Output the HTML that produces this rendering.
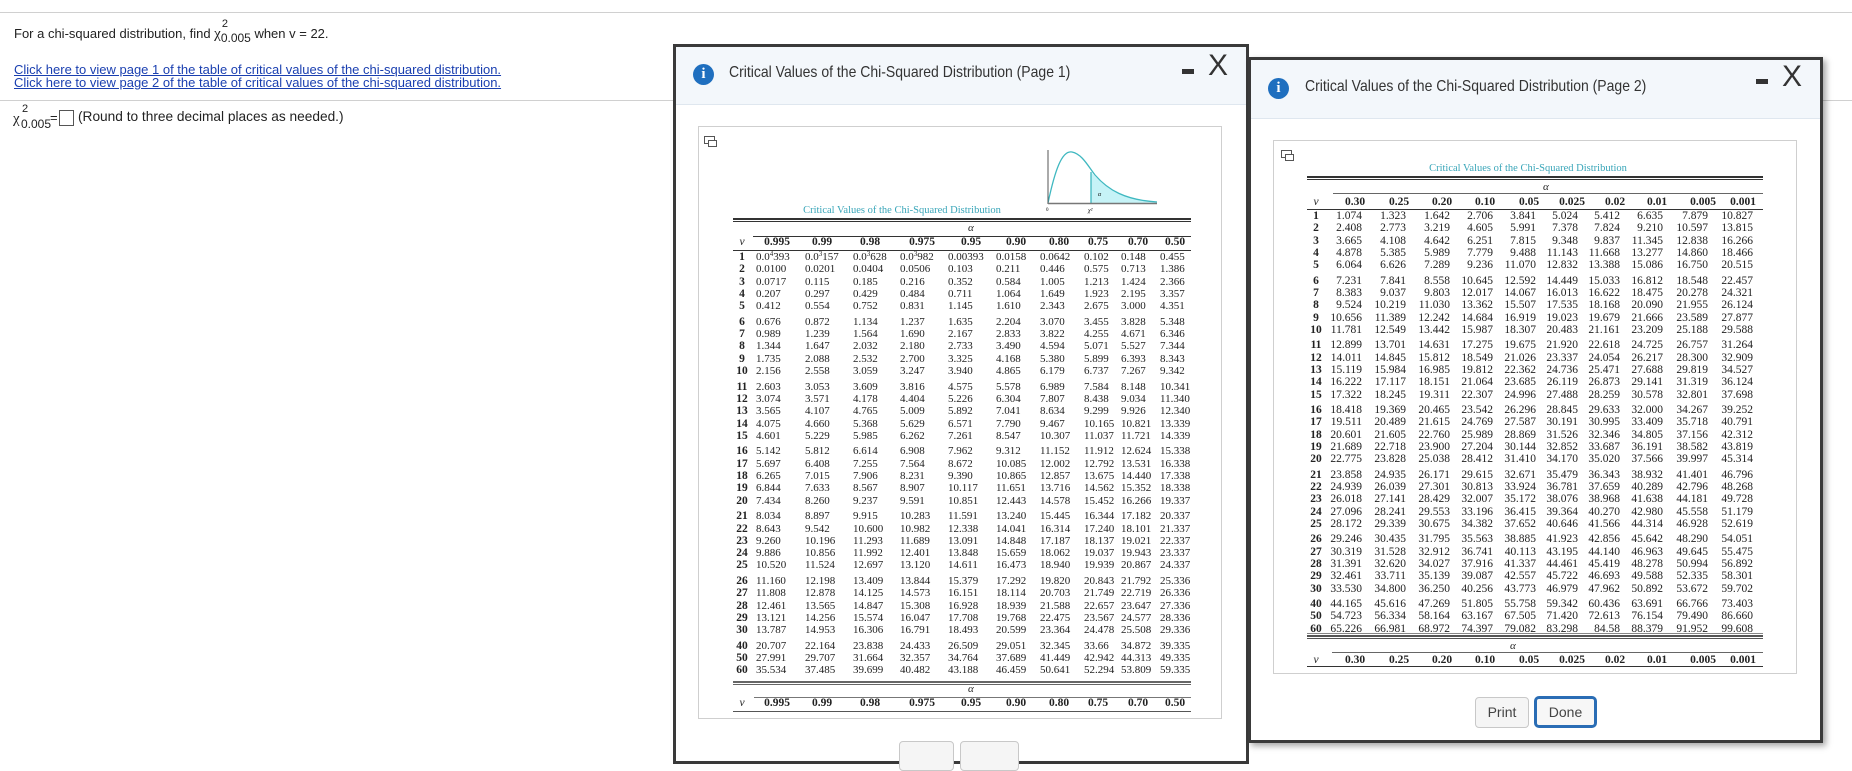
<!DOCTYPE html>
<html><head><meta charset="utf-8">
<style>
html,body{margin:0;padding:0;}
body{width:1852px;height:749px;position:relative;overflow:hidden;background:#fff;font-family:"Liberation Sans",Arial,sans-serif;color:#222;}
.a{position:absolute;white-space:nowrap;}
.hl{position:absolute;height:1px;background:#d0d0d0;}
a{color:#1a3fb0;text-decoration:underline;}
.dlg{position:absolute;background:#fff;border:3px solid #3a3a3a;box-sizing:border-box;}
.hdr{position:absolute;left:0;right:0;top:0;background:#f3f7fb;border-bottom:1px solid #dfe7ef;}
.ico{position:absolute;width:21px;height:21px;border-radius:50%;background:#1f6fbf;color:#fff;font:bold 15px "Liberation Serif",serif;text-align:center;line-height:21px;}
.ttl{position:absolute;font-size:16px;color:#333;white-space:nowrap;transform:scaleX(0.875);transform-origin:0 50%;}
.min{position:absolute;width:12px;height:5px;background:#333;}
.x{position:absolute;font-size:30px;color:#333;line-height:30px;font-weight:300;}
.panel{position:absolute;border:1px solid #cfcfcf;box-sizing:border-box;}
.sm{position:absolute;width:9px;height:6px;border:1.5px solid #555;}
.sm:after{content:"";position:absolute;left:3px;top:3px;width:7px;height:5px;border:1px solid #555;background:#fff;}
.ru{position:absolute;height:1px;background:#333;}
.cap{position:absolute;font:10.5px "Liberation Serif",serif;color:#3aa6b9;white-space:nowrap;transform:translateX(-50%);}
.al{position:absolute;font:italic 11px "Liberation Serif",serif;color:#222;}
.r{position:absolute;left:0;top:0;width:0;height:14px;line-height:14px;font-family:"Liberation Serif",serif;color:#222;}
.r>*{position:absolute;top:0;white-space:nowrap;}
.t1{font-size:11px;}
.t1>b{left:732px;width:20px;text-align:center;font-size:11.5px;}
.t1>span:nth-of-type(1){left:756px}.t1>span:nth-of-type(2){left:805px}.t1>span:nth-of-type(3){left:853px}
.t1>span:nth-of-type(4){left:900px}.t1>span:nth-of-type(5){left:948px}.t1>span:nth-of-type(6){left:996px}
.t1>span:nth-of-type(7){left:1040px}.t1>span:nth-of-type(8){left:1084px}.t1>span:nth-of-type(9){left:1121px}
.t1>span:nth-of-type(10){left:1160px}
.t1 sup{font-size:7px;vertical-align:4px;line-height:0;}
.h1{font-size:11.5px;font-weight:bold;}
.h1>span{width:50px;text-align:center;}
.h1>i{left:732px;width:20px;text-align:center;font-weight:normal;}
.h1>span:nth-of-type(1){left:752px}.h1>span:nth-of-type(2){left:797px}.h1>span:nth-of-type(3){left:845px}
.h1>span:nth-of-type(4){left:897px}.h1>span:nth-of-type(5){left:946px}.h1>span:nth-of-type(6){left:991px}
.h1>span:nth-of-type(7){left:1034px}.h1>span:nth-of-type(8){left:1073px}.h1>span:nth-of-type(9){left:1113px}
.h1>span:nth-of-type(10){left:1150px}
.t2{font-size:11.5px;}
.t2>b{left:1306px;width:20px;text-align:center;}
.t2>span{width:60px;text-align:right;}
.t2>span:nth-of-type(1){left:1302px}.t2>span:nth-of-type(2){left:1346px}.t2>span:nth-of-type(3){left:1390px}
.t2>span:nth-of-type(4){left:1433px}.t2>span:nth-of-type(5){left:1476px}.t2>span:nth-of-type(6){left:1518px}
.t2>span:nth-of-type(7){left:1560px}.t2>span:nth-of-type(8){left:1603px}.t2>span:nth-of-type(9){left:1648px}
.t2>span:nth-of-type(10){left:1693px}
.h2{font-size:11.5px;font-weight:bold;}
.h2>span{width:50px;text-align:center;}
.h2>i{left:1306px;width:20px;text-align:center;font-weight:normal;}
.h2>span:nth-of-type(1){left:1330px}.h2>span:nth-of-type(2){left:1374px}.h2>span:nth-of-type(3){left:1417px}
.h2>span:nth-of-type(4){left:1460px}.h2>span:nth-of-type(5){left:1504px}.h2>span:nth-of-type(6){left:1547px}
.h2>span:nth-of-type(7){left:1590px}.h2>span:nth-of-type(8){left:1632px}.h2>span:nth-of-type(9){left:1678px}
.h2>span:nth-of-type(10){left:1718px}
.btn{position:absolute;box-sizing:border-box;border:1px solid #c8c8c8;border-radius:4px;background:#f5f5f5;font-size:14px;color:#444;text-align:center;}
</style></head><body>

<div class="hl" style="left:0;top:12px;width:1852px;"></div>
<div class="a" style="left:14px;top:26px;font-size:13px;">For a chi-squared distribution, find <span style="font-family:'Liberation Serif',serif;font-size:15px;">χ</span><span style="display:inline-block;position:relative;width:30px;height:10px;"><span style="position:absolute;left:1px;top:-10px;font-size:11px;">2</span><span style="position:absolute;left:0;top:3px;font-size:12px;">0.005</span></span> when v = 22.</div>
<div class="a" style="left:14px;top:63px;font-size:13px;line-height:13px;"><a>Click here to view page 1 of the table of critical values of the chi-squared distribution.</a><br><a>Click here to view page 2 of the table of critical values of the chi-squared distribution.</a></div>
<div class="hl" style="left:0;top:100px;width:1852px;"></div>
<div class="a" style="left:13px;top:110px;"><span style="font-family:'Liberation Serif',serif;font-size:15px;">χ</span></div>
<div class="a" style="left:22px;top:103px;font-size:11px;">2</div>
<div class="a" style="left:21px;top:117px;font-size:12px;">0.005</div>
<div class="a" style="left:50px;top:110px;font-size:13px;">=</div>
<div class="a" style="left:59px;top:110px;width:13px;height:14px;border:1px solid #555;"></div>
<div class="a" style="left:78px;top:109px;font-size:13.7px;">(Round to three decimal places as needed.)</div>

<!-- Dialog 1 -->
<div class="dlg" style="left:673px;top:44px;width:576px;height:720px;">
 <div class="hdr" style="height:57px;"></div>
</div>
<div class="ico" style="left:693px;top:64px;">i</div>
<div class="ttl" style="left:729px;top:64px;">Critical Values of the Chi-Squared Distribution (Page 1)</div>
<div class="min" style="left:1182px;top:69px;"></div>
<div class="x" style="left:1208px;top:51px;">X</div>
<div class="panel" style="left:698px;top:126px;width:524px;height:593px;"></div>
<div class="sm" style="left:704px;top:136px;"></div>
<svg class="a" style="left:1040px;top:145px;" width="125" height="72" viewBox="1040 145 125 72">
 <path d="M1091 172 C1105 188 1120 198 1157 202 L1157 203 L1091 203 Z" fill="#c6f3f7"/>
 <path d="M1048 203 C1055 170 1062 150 1072 152 C1082 154 1088 166 1095 175 C1108 190 1125 200 1157 202" fill="none" stroke="#3fb8c0" stroke-width="1.3"/>
 <line x1="1091" y1="172" x2="1091" y2="203" stroke="#3fb8c0" stroke-width="1.3"/>
 <line x1="1048" y1="150" x2="1048" y2="204" stroke="#555" stroke-width="1"/>
 <line x1="1048" y1="203.5" x2="1157" y2="203.5" stroke="#777" stroke-width="1.5"/>
 <text x="1046" y="211" font-size="5" font-family="Liberation Serif">0</text>
 <text x="1088" y="212" font-size="6" font-family="Liberation Serif" font-style="italic">χ²</text>
 <text x="1098" y="196" font-size="6" font-family="Liberation Serif" font-style="italic">α</text>
</svg>
<div class="cap" style="left:902px;top:205px;">Critical Values of the Chi-Squared Distribution</div>
<div class="ru" style="left:733px;top:218px;width:458px;height:1.5px;"></div>
<div class="ru" style="left:733px;top:221px;width:458px;"></div>
<div class="al" style="left:968px;top:222px;">α</div>
<div class="ru" style="left:753px;top:236px;width:438px;"></div>
<div class="r h1" style="top:235px;"><i>v</i><span>0.995</span><span>0.99</span><span>0.98</span><span>0.975</span><span>0.95</span><span>0.90</span><span>0.80</span><span>0.75</span><span>0.70</span><span>0.50</span></div>
<div class="ru" style="left:733px;top:250px;width:458px;"></div>

<div class="r t1" style="top:250px"><b>1</b><span>0.0<sup>4</sup>393</span><span>0.0<sup>3</sup>157</span><span>0.0<sup>3</sup>628</span><span>0.0<sup>3</sup>982</span><span>0.00393</span><span>0.0158</span><span>0.0642</span><span>0.102</span><span>0.148</span><span>0.455</span></div>
<div class="r t1" style="top:262px"><b>2</b><span>0.0100</span><span>0.0201</span><span>0.0404</span><span>0.0506</span><span>0.103</span><span>0.211</span><span>0.446</span><span>0.575</span><span>0.713</span><span>1.386</span></div>
<div class="r t1" style="top:275px"><b>3</b><span>0.0717</span><span>0.115</span><span>0.185</span><span>0.216</span><span>0.352</span><span>0.584</span><span>1.005</span><span>1.213</span><span>1.424</span><span>2.366</span></div>
<div class="r t1" style="top:287px"><b>4</b><span>0.207</span><span>0.297</span><span>0.429</span><span>0.484</span><span>0.711</span><span>1.064</span><span>1.649</span><span>1.923</span><span>2.195</span><span>3.357</span></div>
<div class="r t1" style="top:299px"><b>5</b><span>0.412</span><span>0.554</span><span>0.752</span><span>0.831</span><span>1.145</span><span>1.610</span><span>2.343</span><span>2.675</span><span>3.000</span><span>4.351</span></div>
<div class="r t1" style="top:315px"><b>6</b><span>0.676</span><span>0.872</span><span>1.134</span><span>1.237</span><span>1.635</span><span>2.204</span><span>3.070</span><span>3.455</span><span>3.828</span><span>5.348</span></div>
<div class="r t1" style="top:327px"><b>7</b><span>0.989</span><span>1.239</span><span>1.564</span><span>1.690</span><span>2.167</span><span>2.833</span><span>3.822</span><span>4.255</span><span>4.671</span><span>6.346</span></div>
<div class="r t1" style="top:339px"><b>8</b><span>1.344</span><span>1.647</span><span>2.032</span><span>2.180</span><span>2.733</span><span>3.490</span><span>4.594</span><span>5.071</span><span>5.527</span><span>7.344</span></div>
<div class="r t1" style="top:352px"><b>9</b><span>1.735</span><span>2.088</span><span>2.532</span><span>2.700</span><span>3.325</span><span>4.168</span><span>5.380</span><span>5.899</span><span>6.393</span><span>8.343</span></div>
<div class="r t1" style="top:364px"><b>10</b><span>2.156</span><span>2.558</span><span>3.059</span><span>3.247</span><span>3.940</span><span>4.865</span><span>6.179</span><span>6.737</span><span>7.267</span><span>9.342</span></div>
<div class="r t1" style="top:380px"><b>11</b><span>2.603</span><span>3.053</span><span>3.609</span><span>3.816</span><span>4.575</span><span>5.578</span><span>6.989</span><span>7.584</span><span>8.148</span><span>10.341</span></div>
<div class="r t1" style="top:392px"><b>12</b><span>3.074</span><span>3.571</span><span>4.178</span><span>4.404</span><span>5.226</span><span>6.304</span><span>7.807</span><span>8.438</span><span>9.034</span><span>11.340</span></div>
<div class="r t1" style="top:404px"><b>13</b><span>3.565</span><span>4.107</span><span>4.765</span><span>5.009</span><span>5.892</span><span>7.041</span><span>8.634</span><span>9.299</span><span>9.926</span><span>12.340</span></div>
<div class="r t1" style="top:417px"><b>14</b><span>4.075</span><span>4.660</span><span>5.368</span><span>5.629</span><span>6.571</span><span>7.790</span><span>9.467</span><span>10.165</span><span>10.821</span><span>13.339</span></div>
<div class="r t1" style="top:429px"><b>15</b><span>4.601</span><span>5.229</span><span>5.985</span><span>6.262</span><span>7.261</span><span>8.547</span><span>10.307</span><span>11.037</span><span>11.721</span><span>14.339</span></div>
<div class="r t1" style="top:444px"><b>16</b><span>5.142</span><span>5.812</span><span>6.614</span><span>6.908</span><span>7.962</span><span>9.312</span><span>11.152</span><span>11.912</span><span>12.624</span><span>15.338</span></div>
<div class="r t1" style="top:457px"><b>17</b><span>5.697</span><span>6.408</span><span>7.255</span><span>7.564</span><span>8.672</span><span>10.085</span><span>12.002</span><span>12.792</span><span>13.531</span><span>16.338</span></div>
<div class="r t1" style="top:469px"><b>18</b><span>6.265</span><span>7.015</span><span>7.906</span><span>8.231</span><span>9.390</span><span>10.865</span><span>12.857</span><span>13.675</span><span>14.440</span><span>17.338</span></div>
<div class="r t1" style="top:481px"><b>19</b><span>6.844</span><span>7.633</span><span>8.567</span><span>8.907</span><span>10.117</span><span>11.651</span><span>13.716</span><span>14.562</span><span>15.352</span><span>18.338</span></div>
<div class="r t1" style="top:494px"><b>20</b><span>7.434</span><span>8.260</span><span>9.237</span><span>9.591</span><span>10.851</span><span>12.443</span><span>14.578</span><span>15.452</span><span>16.266</span><span>19.337</span></div>
<div class="r t1" style="top:509px"><b>21</b><span>8.034</span><span>8.897</span><span>9.915</span><span>10.283</span><span>11.591</span><span>13.240</span><span>15.445</span><span>16.344</span><span>17.182</span><span>20.337</span></div>
<div class="r t1" style="top:522px"><b>22</b><span>8.643</span><span>9.542</span><span>10.600</span><span>10.982</span><span>12.338</span><span>14.041</span><span>16.314</span><span>17.240</span><span>18.101</span><span>21.337</span></div>
<div class="r t1" style="top:534px"><b>23</b><span>9.260</span><span>10.196</span><span>11.293</span><span>11.689</span><span>13.091</span><span>14.848</span><span>17.187</span><span>18.137</span><span>19.021</span><span>22.337</span></div>
<div class="r t1" style="top:546px"><b>24</b><span>9.886</span><span>10.856</span><span>11.992</span><span>12.401</span><span>13.848</span><span>15.659</span><span>18.062</span><span>19.037</span><span>19.943</span><span>23.337</span></div>
<div class="r t1" style="top:558px"><b>25</b><span>10.520</span><span>11.524</span><span>12.697</span><span>13.120</span><span>14.611</span><span>16.473</span><span>18.940</span><span>19.939</span><span>20.867</span><span>24.337</span></div>
<div class="r t1" style="top:574px"><b>26</b><span>11.160</span><span>12.198</span><span>13.409</span><span>13.844</span><span>15.379</span><span>17.292</span><span>19.820</span><span>20.843</span><span>21.792</span><span>25.336</span></div>
<div class="r t1" style="top:586px"><b>27</b><span>11.808</span><span>12.878</span><span>14.125</span><span>14.573</span><span>16.151</span><span>18.114</span><span>20.703</span><span>21.749</span><span>22.719</span><span>26.336</span></div>
<div class="r t1" style="top:599px"><b>28</b><span>12.461</span><span>13.565</span><span>14.847</span><span>15.308</span><span>16.928</span><span>18.939</span><span>21.588</span><span>22.657</span><span>23.647</span><span>27.336</span></div>
<div class="r t1" style="top:611px"><b>29</b><span>13.121</span><span>14.256</span><span>15.574</span><span>16.047</span><span>17.708</span><span>19.768</span><span>22.475</span><span>23.567</span><span>24.577</span><span>28.336</span></div>
<div class="r t1" style="top:623px"><b>30</b><span>13.787</span><span>14.953</span><span>16.306</span><span>16.791</span><span>18.493</span><span>20.599</span><span>23.364</span><span>24.478</span><span>25.508</span><span>29.336</span></div>
<div class="r t1" style="top:639px"><b>40</b><span>20.707</span><span>22.164</span><span>23.838</span><span>24.433</span><span>26.509</span><span>29.051</span><span>32.345</span><span>33.66</span><span>34.872</span><span>39.335</span></div>
<div class="r t1" style="top:651px"><b>50</b><span>27.991</span><span>29.707</span><span>31.664</span><span>32.357</span><span>34.764</span><span>37.689</span><span>41.449</span><span>42.942</span><span>44.313</span><span>49.335</span></div>
<div class="r t1" style="top:663px"><b>60</b><span>35.534</span><span>37.485</span><span>39.699</span><span>40.482</span><span>43.188</span><span>46.459</span><span>50.641</span><span>52.294</span><span>53.809</span><span>59.335</span></div>
<div class="ru" style="left:733px;top:681px;width:458px;height:1.5px;background:#666;"></div>
<div class="ru" style="left:733px;top:684px;width:458px;background:#666;"></div>
<div class="al" style="left:968px;top:683px;">α</div>
<div class="ru" style="left:754px;top:697px;width:437px;background:#777;"></div>
<div class="r h1" style="top:696px;"><i>v</i><span>0.995</span><span>0.99</span><span>0.98</span><span>0.975</span><span>0.95</span><span>0.90</span><span>0.80</span><span>0.75</span><span>0.70</span><span>0.50</span></div>
<div class="ru" style="left:733px;top:711px;width:458px;background:#555;"></div>
<div class="btn" style="left:899px;top:741px;width:55px;height:30px;"></div>
<div class="btn" style="left:960px;top:741px;width:59px;height:30px;"></div>

<!-- Dialog 2 -->
<div class="dlg" style="left:1248px;top:57px;width:575px;height:686px;box-shadow:3px 3px 6px rgba(0,0,0,.35);">
 <div class="hdr" style="height:58px;"></div>
</div>
<div class="ico" style="left:1268px;top:78px;">i</div>
<div class="ttl" style="left:1305px;top:78px;">Critical Values of the Chi-Squared Distribution (Page 2)</div>
<div class="min" style="left:1756px;top:79px;"></div>
<div class="x" style="left:1782px;top:62px;">X</div>
<div class="panel" style="left:1273px;top:140px;width:524px;height:534px;"></div>
<div class="sm" style="left:1281px;top:150px;"></div>
<div class="cap" style="left:1528px;top:163px;">Critical Values of the Chi-Squared Distribution</div>
<div class="ru" style="left:1307px;top:176px;width:456px;height:1.5px;"></div>
<div class="ru" style="left:1307px;top:179px;width:456px;"></div>
<div class="al" style="left:1543px;top:181px;">α</div>
<div class="ru" style="left:1333px;top:193px;width:430px;background:#666;"></div>
<div class="r h2" style="top:195px;"><i>v</i><span>0.30</span><span>0.25</span><span>0.20</span><span>0.10</span><span>0.05</span><span>0.025</span><span>0.02</span><span>0.01</span><span>0.005</span><span>0.001</span></div>
<div class="ru" style="left:1307px;top:209px;width:456px;"></div>

<div class="r t2" style="top:209px"><b>1</b><span>1.074</span><span>1.323</span><span>1.642</span><span>2.706</span><span>3.841</span><span>5.024</span><span>5.412</span><span>6.635</span><span>7.879</span><span>10.827</span></div>
<div class="r t2" style="top:221px"><b>2</b><span>2.408</span><span>2.773</span><span>3.219</span><span>4.605</span><span>5.991</span><span>7.378</span><span>7.824</span><span>9.210</span><span>10.597</span><span>13.815</span></div>
<div class="r t2" style="top:234px"><b>3</b><span>3.665</span><span>4.108</span><span>4.642</span><span>6.251</span><span>7.815</span><span>9.348</span><span>9.837</span><span>11.345</span><span>12.838</span><span>16.266</span></div>
<div class="r t2" style="top:246px"><b>4</b><span>4.878</span><span>5.385</span><span>5.989</span><span>7.779</span><span>9.488</span><span>11.143</span><span>11.668</span><span>13.277</span><span>14.860</span><span>18.466</span></div>
<div class="r t2" style="top:258px"><b>5</b><span>6.064</span><span>6.626</span><span>7.289</span><span>9.236</span><span>11.070</span><span>12.832</span><span>13.388</span><span>15.086</span><span>16.750</span><span>20.515</span></div>
<div class="r t2" style="top:274px"><b>6</b><span>7.231</span><span>7.841</span><span>8.558</span><span>10.645</span><span>12.592</span><span>14.449</span><span>15.033</span><span>16.812</span><span>18.548</span><span>22.457</span></div>
<div class="r t2" style="top:286px"><b>7</b><span>8.383</span><span>9.037</span><span>9.803</span><span>12.017</span><span>14.067</span><span>16.013</span><span>16.622</span><span>18.475</span><span>20.278</span><span>24.321</span></div>
<div class="r t2" style="top:298px"><b>8</b><span>9.524</span><span>10.219</span><span>11.030</span><span>13.362</span><span>15.507</span><span>17.535</span><span>18.168</span><span>20.090</span><span>21.955</span><span>26.124</span></div>
<div class="r t2" style="top:311px"><b>9</b><span>10.656</span><span>11.389</span><span>12.242</span><span>14.684</span><span>16.919</span><span>19.023</span><span>19.679</span><span>21.666</span><span>23.589</span><span>27.877</span></div>
<div class="r t2" style="top:323px"><b>10</b><span>11.781</span><span>12.549</span><span>13.442</span><span>15.987</span><span>18.307</span><span>20.483</span><span>21.161</span><span>23.209</span><span>25.188</span><span>29.588</span></div>
<div class="r t2" style="top:338px"><b>11</b><span>12.899</span><span>13.701</span><span>14.631</span><span>17.275</span><span>19.675</span><span>21.920</span><span>22.618</span><span>24.725</span><span>26.757</span><span>31.264</span></div>
<div class="r t2" style="top:351px"><b>12</b><span>14.011</span><span>14.845</span><span>15.812</span><span>18.549</span><span>21.026</span><span>23.337</span><span>24.054</span><span>26.217</span><span>28.300</span><span>32.909</span></div>
<div class="r t2" style="top:363px"><b>13</b><span>15.119</span><span>15.984</span><span>16.985</span><span>19.812</span><span>22.362</span><span>24.736</span><span>25.471</span><span>27.688</span><span>29.819</span><span>34.527</span></div>
<div class="r t2" style="top:375px"><b>14</b><span>16.222</span><span>17.117</span><span>18.151</span><span>21.064</span><span>23.685</span><span>26.119</span><span>26.873</span><span>29.141</span><span>31.319</span><span>36.124</span></div>
<div class="r t2" style="top:388px"><b>15</b><span>17.322</span><span>18.245</span><span>19.311</span><span>22.307</span><span>24.996</span><span>27.488</span><span>28.259</span><span>30.578</span><span>32.801</span><span>37.698</span></div>
<div class="r t2" style="top:403px"><b>16</b><span>18.418</span><span>19.369</span><span>20.465</span><span>23.542</span><span>26.296</span><span>28.845</span><span>29.633</span><span>32.000</span><span>34.267</span><span>39.252</span></div>
<div class="r t2" style="top:415px"><b>17</b><span>19.511</span><span>20.489</span><span>21.615</span><span>24.769</span><span>27.587</span><span>30.191</span><span>30.995</span><span>33.409</span><span>35.718</span><span>40.791</span></div>
<div class="r t2" style="top:428px"><b>18</b><span>20.601</span><span>21.605</span><span>22.760</span><span>25.989</span><span>28.869</span><span>31.526</span><span>32.346</span><span>34.805</span><span>37.156</span><span>42.312</span></div>
<div class="r t2" style="top:440px"><b>19</b><span>21.689</span><span>22.718</span><span>23.900</span><span>27.204</span><span>30.144</span><span>32.852</span><span>33.687</span><span>36.191</span><span>38.582</span><span>43.819</span></div>
<div class="r t2" style="top:452px"><b>20</b><span>22.775</span><span>23.828</span><span>25.038</span><span>28.412</span><span>31.410</span><span>34.170</span><span>35.020</span><span>37.566</span><span>39.997</span><span>45.314</span></div>
<div class="r t2" style="top:468px"><b>21</b><span>23.858</span><span>24.935</span><span>26.171</span><span>29.615</span><span>32.671</span><span>35.479</span><span>36.343</span><span>38.932</span><span>41.401</span><span>46.796</span></div>
<div class="r t2" style="top:480px"><b>22</b><span>24.939</span><span>26.039</span><span>27.301</span><span>30.813</span><span>33.924</span><span>36.781</span><span>37.659</span><span>40.289</span><span>42.796</span><span>48.268</span></div>
<div class="r t2" style="top:492px"><b>23</b><span>26.018</span><span>27.141</span><span>28.429</span><span>32.007</span><span>35.172</span><span>38.076</span><span>38.968</span><span>41.638</span><span>44.181</span><span>49.728</span></div>
<div class="r t2" style="top:505px"><b>24</b><span>27.096</span><span>28.241</span><span>29.553</span><span>33.196</span><span>36.415</span><span>39.364</span><span>40.270</span><span>42.980</span><span>45.558</span><span>51.179</span></div>
<div class="r t2" style="top:517px"><b>25</b><span>28.172</span><span>29.339</span><span>30.675</span><span>34.382</span><span>37.652</span><span>40.646</span><span>41.566</span><span>44.314</span><span>46.928</span><span>52.619</span></div>
<div class="r t2" style="top:532px"><b>26</b><span>29.246</span><span>30.435</span><span>31.795</span><span>35.563</span><span>38.885</span><span>41.923</span><span>42.856</span><span>45.642</span><span>48.290</span><span>54.051</span></div>
<div class="r t2" style="top:545px"><b>27</b><span>30.319</span><span>31.528</span><span>32.912</span><span>36.741</span><span>40.113</span><span>43.195</span><span>44.140</span><span>46.963</span><span>49.645</span><span>55.475</span></div>
<div class="r t2" style="top:557px"><b>28</b><span>31.391</span><span>32.620</span><span>34.027</span><span>37.916</span><span>41.337</span><span>44.461</span><span>45.419</span><span>48.278</span><span>50.994</span><span>56.892</span></div>
<div class="r t2" style="top:569px"><b>29</b><span>32.461</span><span>33.711</span><span>35.139</span><span>39.087</span><span>42.557</span><span>45.722</span><span>46.693</span><span>49.588</span><span>52.335</span><span>58.301</span></div>
<div class="r t2" style="top:582px"><b>30</b><span>33.530</span><span>34.800</span><span>36.250</span><span>40.256</span><span>43.773</span><span>46.979</span><span>47.962</span><span>50.892</span><span>53.672</span><span>59.702</span></div>
<div class="r t2" style="top:597px"><b>40</b><span>44.165</span><span>45.616</span><span>47.269</span><span>51.805</span><span>55.758</span><span>59.342</span><span>60.436</span><span>63.691</span><span>66.766</span><span>73.403</span></div>
<div class="r t2" style="top:609px"><b>50</b><span>54.723</span><span>56.334</span><span>58.164</span><span>63.167</span><span>67.505</span><span>71.420</span><span>72.613</span><span>76.154</span><span>79.490</span><span>86.660</span></div>
<div class="r t2" style="top:622px"><b>60</b><span>65.226</span><span>66.981</span><span>68.972</span><span>74.397</span><span>79.082</span><span>83.298</span><span>84.58</span><span>88.379</span><span>91.952</span><span>99.608</span></div>
<div class="ru" style="left:1307px;top:633px;width:456px;background:#888;"></div>
<div class="ru" style="left:1307px;top:635px;width:456px;height:1.5px;background:#555;"></div>
<div class="ru" style="left:1307px;top:638px;width:456px;background:#555;"></div>
<div class="al" style="left:1510px;top:640px;">α</div>
<div class="ru" style="left:1332px;top:652px;width:431px;background:#666;"></div>
<div class="r h2" style="top:653px;"><i>v</i><span>0.30</span><span>0.25</span><span>0.20</span><span>0.10</span><span>0.05</span><span>0.025</span><span>0.02</span><span>0.01</span><span>0.005</span><span>0.001</span></div>
<div class="ru" style="left:1307px;top:666px;width:456px;"></div>

<div class="btn" style="left:1475px;top:697px;width:54px;height:31px;line-height:29px;">Print</div>
<div class="btn" style="left:1534px;top:696px;width:63px;height:32px;line-height:27px;border:3px solid #2a6db5;border-radius:5px;background:#f7f7f7;">Done</div>

</body></html>
